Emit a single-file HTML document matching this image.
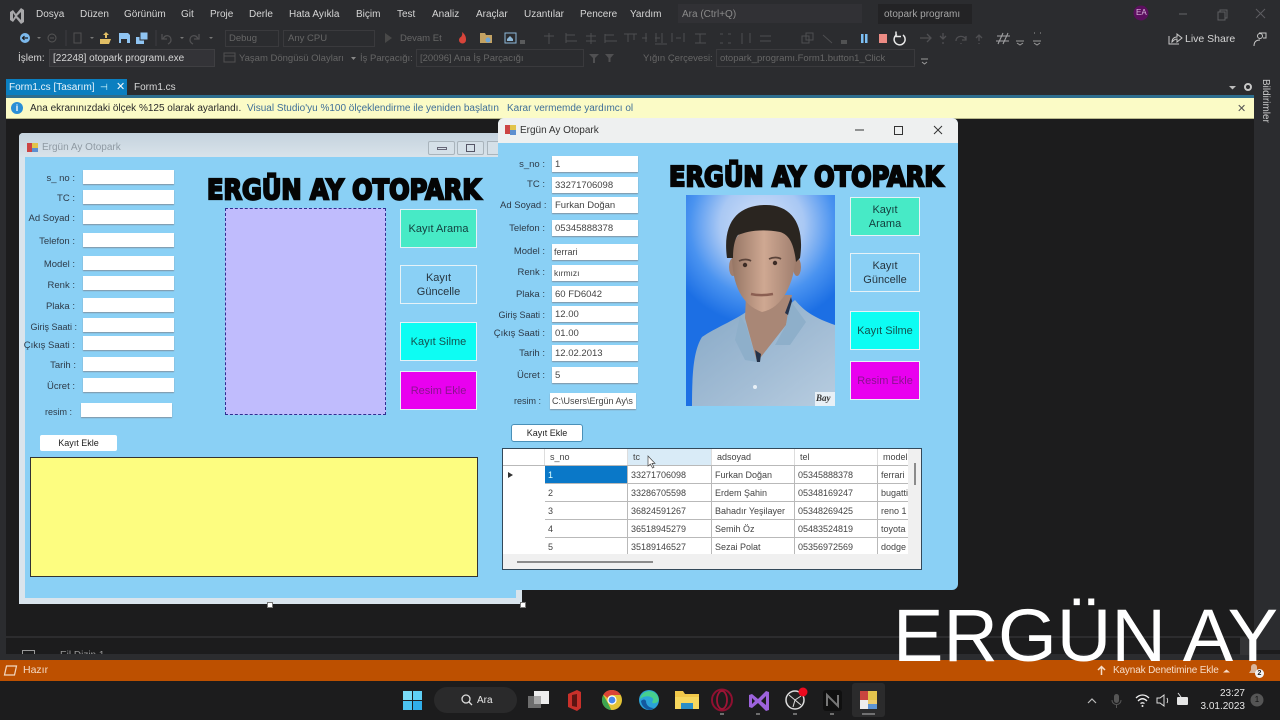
<!DOCTYPE html>
<html lang="tr"><head><meta charset="utf-8"><title>otopark programı</title>
<style>
html,body{margin:0;padding:0;width:1280px;height:720px;overflow:hidden;background:#1c1c1d}
body{position:relative;font-family:"Liberation Sans","DejaVu Sans",sans-serif;font-size:10px;color:#ddd;filter:blur(.3px)}
div{position:absolute;white-space:nowrap;box-sizing:border-box}
.m{top:8px;font-size:10px;line-height:13px;color:#d6d6d6}
.t{font-size:9.5px;line-height:13px;color:#666}
.ic{position:absolute;left:0;top:0}
.l{font-size:9.5px;line-height:12px;color:#2d3a48;text-align:right}
.in{background:#fff;box-shadow:0 1px 1px #8095a5;font-size:9.5px;line-height:17px;color:#444;padding-left:3px;overflow:hidden}
.b{border:1.5px solid #e6f2f7;padding-top:2px;font-size:11px;line-height:13.5px;color:#26353f;text-align:center;display:flex;align-items:center;justify-content:center;white-space:normal}
.h{top:449px;height:17px;font-size:9px;line-height:17px;color:#444;background:#fff;padding-left:5px;border-right:1px solid #ddd}
.c{height:18px;font-size:9px;line-height:19px;color:#444;background:#fff;border-right:1px solid #b9b9b9;border-bottom:1px solid #b9b9b9;padding-left:3px;overflow:hidden}
</style></head><body>

<!-- top chrome -->
<div style="left:0;top:0;width:1280px;height:95px;background:#2b2c2f"></div>
<svg class="ic" width="1280" height="95" style="z-index:1">
<path d="M10 12l3-2 3 4 5-6 3 2v12l-3 2-5-6-3 4-3-2zM13 13v6l2-3zM21 12l-4 4 4 4z" fill="#a8a8aa" fill-rule="evenodd"/>
<circle cx="25" cy="38" r="5" fill="#7cb9ec"/><path d="M28 38h-6M24.500 36l-2 2 2 2" stroke="#1c1c1d" fill="none" stroke-width="1.200"/>
<circle cx="52" cy="38" r="4" fill="none" stroke="#555"/><path d="M50 38h4" stroke="#555"/>
<path d="M37 37h4l-2 2zM90 37h4l-2 2zM180 37h4l-2 2zM209 37h4l-2 2z" fill="#777"/>
<rect x="74" y="33" width="7" height="10" fill="none" stroke="#505052"/>
<path d="M66 30v16M156 30v16" stroke="#3d3d40"/>
<path d="M100 39h11l-2 5h-9zM106 32l3 3h-2v3h-2v-3h-2z" fill="#e2bf65"/>
<path d="M119 33h9l2 2v8h-11z" fill="#8fc4f2"/><rect x="121" y="39" width="6" height="4" fill="#2b2c2f"/>
<rect x="136" y="37" width="8" height="7" fill="#8fc4f2"/><rect x="140" y="32" width="8" height="8" fill="#8fc4f2" stroke="#2b2c2f"/>
<path d="M162 34v5h5M163 39c2-5 8-4 8 1 0 2-1 3-3 4" fill="none" stroke="#505052" stroke-width="1.300"/>
<path d="M199 34v5h-5M198 39c-2-5-8-4-8 1 0 2 1 3 3 4" fill="none" stroke="#505052" stroke-width="1.300"/>
<path d="M385 33l7 5-7 5z" fill="#484848"/>
<path d="M461 37c2-3 1-4 1-5 4 3 4 6 4 8a3.500 3.500 0 0 1-7 0c0-1 1-3 2-3z" fill="#d8443a"/>
<path d="M480 33h5l1 2h6v8h-12z" fill="#c3a263"/><circle cx="488" cy="40" r="2.500" fill="#6fa6d8"/>
<rect x="505" y="33" width="11" height="10" fill="none" stroke="#8cb7d8"/><path d="M507 39l3-3 3 3v2h-6z" fill="#8cb7d8"/>
<path d="M520 41h5M520 43h5" stroke="#8a8a8a"/>
<g fill="none" stroke="#4e4e50">
<path d="M549 33v11M544 36h10M566 33v10M566 35h9M566 41h11M591 33v11M586 36h10M586 41h10M605 34v9M605 35h9M605 41h12M624 34h13M628 34v8M634 34v6M646 33v9M656 33v9M642 38h5M655 38h5M655 44h12M662 33v10M672 33v9M684 33v9M676 38h5M695 34h11M695 43h11M700 34v9M720 34h3M728 34h3M720 43h3M728 43h3M742 33v11M750 33v10M760 36h11M760 41h11"/>
<rect x="802" y="36" width="7" height="7"/><rect x="806" y="33" width="7" height="7"/>
<path d="M823 35l9 8"/>
</g>
<path d="M841 41h6M841 43h6" stroke="#777"/>
<rect x="861" y="34" width="2.500" height="9" fill="#7cc0f5"/><rect x="865" y="34" width="2.500" height="9" fill="#7cc0f5"/>
<rect x="879" y="34" width="8" height="9" fill="#ec8b84"/>
<path d="M903 35a5.500 5.500 0 1 1-6-.5M896 31.500v5h5" stroke="#e8e8e8" stroke-width="1.500" fill="none"/>
<g fill="none" stroke="#4f4f52" stroke-width="1.300">
<path d="M920 38h11M927 34l4 4-4 4M943 33v5M940 36l3 3 3-3M943 42v2M956 41c0-6 9-6 10-1M966 36v4h-4M961 43v1M979 35v6M976 38l3-3 3 3M979 43v1"/>
</g>
<path d="M1003 33l-5 11M1008 33l-5 11M997 36h13M996 41h13" fill="none" stroke="#a5a5a7"/>
<path d="M1016 41h8M1017 43l3 2 3-2M1034 33h1M1040 33h1M1033 41h8M1034 43l3 2 3-2M921 59h7M922 62l2.500 2 2.500-2" fill="none" stroke="#9a9a9a"/>
<path d="M208 57h5l-2.500 3zM351 57h5l-2.500 3z" fill="#888"/>
<rect x="224" y="53" width="11" height="9" fill="none" stroke="#505052"/><path d="M224 56h11" stroke="#505052"/>
<path d="M1169 36v8h10M1172 42c0-3 2-5 5-5v-3l5 4-5 4v-3c-2 0-3 1-5 3z" fill="none" stroke="#c8c8c8"/>
<circle cx="1141" cy="13" r="7.500" fill="#5b0f5e"/>
<path d="M1179 14h8" stroke="#66666a"/>
<rect x="1218" y="12" width="7" height="8" fill="none" stroke="#5e5e62"/><path d="M1220 12v-2h7v8h-2" fill="none" stroke="#5e5e62"/>
<path d="M1256 9l9 9M1265 9l-9 9" stroke="#5e5e62"/>
<circle cx="852" cy="11.500" r="3" fill="none" stroke="#ececec" stroke-width="1.500"/><path d="M850 14l-3.500 3.500" stroke="#ececec" stroke-width="1.800"/>
<circle cx="1260" cy="36" r="2.500" fill="none" stroke="#c6c6c6"/><path d="M1254 46c0-4 2-6 6-6M1259 33h7v5h-3" fill="none" stroke="#c6c6c6"/>
<path d="M589 54h10l-4 4v5h-2v-5zM605 54h9l-3.500 4v4h-2v-4zM627 58l9-3M627 62l9-3" fill="#505052"/>
<path d="M1229 86h7l-3.500 3.500z" fill="#bdbdbd"/>
<circle cx="1248" cy="87" r="3" stroke="#c8c8c8" stroke-width="2" fill="none"/>
</svg>
<div style="z-index:2;left:0;top:0;width:0;height:0">
<div class="m" style="left:36px">Dosya</div><div class="m" style="left:80px">Düzen</div><div class="m" style="left:124px">Görünüm</div><div class="m" style="left:181px">Git</div><div class="m" style="left:210px">Proje</div><div class="m" style="left:249px">Derle</div><div class="m" style="left:289px">Hata Ayıkla</div><div class="m" style="left:356px">Biçim</div><div class="m" style="left:397px">Test</div><div class="m" style="left:432px">Analiz</div><div class="m" style="left:476px">Araçlar</div><div class="m" style="left:524px">Uzantılar</div><div class="m" style="left:580px">Pencere</div><div class="m" style="left:630px">Yardım</div>
<div style="left:678px;top:4px;width:184px;height:19px;background:#313135"></div>
<div class="m" style="left:682px;color:#8a8a8a">Ara (Ctrl+Q)</div>
<div style="left:878px;top:4px;width:94px;height:20px;background:#232325"></div>
<div class="m" style="left:884px;color:#a5a5a5">otopark programı</div>
<div style="left:1136px;top:7px;font-size:8px;line-height:12px;color:#d9b6dc">EA</div>
<div style="left:225px;top:30px;width:54px;height:17px;border:1px solid #3a3a3d"></div>
<div style="left:283px;top:30px;width:92px;height:17px;border:1px solid #3a3a3d"></div>
<div class="t" style="left:229px;top:32px">Debug</div><div class="t" style="left:288px;top:32px">Any CPU</div>
<div class="t" style="left:400px;top:32px">Devam Et</div>
<div class="m" style="left:18px;top:52px">İşlem:</div>
<div style="left:49px;top:49px;width:166px;height:18px;background:#333337;border:1px solid #3f3f42"></div>
<div class="m" style="left:53px;top:52px">[22248] otopark programı.exe</div>
<div class="t" style="left:239px;top:52px">Yaşam Döngüsü Olayları</div><div class="t" style="left:360px;top:52px">İş Parçacığı:</div>
<div style="left:416px;top:49px;width:168px;height:18px;border:1px solid #3a3a3d"></div>
<div class="t" style="left:420px;top:52px">[20096] Ana İş Parçacığı</div>
<div class="t" style="left:643px;top:52px">Yığın Çerçevesi:</div>
<div style="left:716px;top:49px;width:199px;height:18px;border:1px solid #3a3a3d"></div>
<div class="t" style="left:720px;top:52px">otopark_programı.Form1.button1_Click</div>
<div style="left:1185px;top:32px;font-size:10.5px;line-height:14px;color:#d6d6d6">Live Share</div>
</div>

<!-- tabs + info bar -->
<div style="left:6px;top:79px;width:121px;height:17px;background:#0b7fc0"></div>
<div style="left:9px;top:81px;font-size:10px;line-height:13px;color:#e8f4fb">Form1.cs [Tasarım]</div>
<div style="left:100px;top:81px;font-size:9px;line-height:13px;color:#dff">⊣</div>
<div style="left:116px;top:81px;font-size:11px;line-height:13px;color:#f2f8fc">✕</div>
<div style="left:134px;top:81px;font-size:10px;line-height:13px;color:#d6d6d6">Form1.cs</div>
<div style="left:6px;top:95px;width:1248px;height:3px;background:#2e6e8e"></div>
<div style="left:6px;top:98px;width:1248px;height:21px;background:#fbfbc6;border-bottom:1px solid #b9b98c"></div>
<div style="left:11px;top:102px;width:12px;height:12px;border-radius:50%;background:#2a8fd6;color:#fff;font-size:9px;line-height:12px;text-align:center;font-weight:bold">i</div>
<div style="left:30px;top:102px;font-size:10px;line-height:13px;color:#2a2a2a">Ana ekranınızdaki ölçek %125 olarak ayarlandı.</div>
<div style="left:247px;top:102px;font-size:10px;line-height:13px;color:#3f6f98">Visual Studio'yu %100 ölçeklendirme ile yeniden başlatın</div>
<div style="left:507px;top:102px;font-size:10px;line-height:13px;color:#3f6f98">Karar vermemde yardımcı ol</div>
<div style="left:1237px;top:103px;font-size:11px;line-height:12px;color:#555">✕</div>
<div style="left:1254px;top:95px;width:26px;height:555px;background:#2b2c2f"></div>
<div style="left:1259px;top:79px;font-size:10px;line-height:12px;color:#c9c9c9;writing-mode:vertical-rl">Bildirimler</div>
<div style="left:0;top:95px;width:6px;height:560px;background:#2b2c2f"></div>

<!-- designer form -->
<div style="left:19px;top:133px;width:503px;height:471px;background:#d9e4ec;border-radius:4px 4px 0 0"></div>
<div style="left:19px;top:133px;width:503px;height:24px;background:linear-gradient(#c5d3de,#d9e3ea);border-radius:4px 4px 0 0"></div>
<div style="left:25px;top:157px;width:491px;height:441px;background:#8ad0f5"></div>
<div style="left:27px;top:143px;width:6px;height:9px;background:#c44"></div><div style="left:32px;top:143px;width:6px;height:5px;background:#e2c44a"></div><div style="left:32px;top:148px;width:6px;height:4px;background:#5d8fd0"></div>
<div style="left:42px;top:141px;font-size:10px;line-height:13px;color:#8f9aa3">Ergün Ay Otopark</div>
<div style="left:428px;top:141px;width:27px;height:14px;background:#d5e0e8;border:1px solid #a9b4bc;border-radius:2px"></div><div style="left:437px;top:147px;width:10px;height:3px;border:1px solid #667"></div>
<div style="left:457px;top:141px;width:27px;height:14px;background:#d5e0e8;border:1px solid #a9b4bc;border-radius:2px"></div><div style="left:466px;top:144px;width:9px;height:8px;border:1px solid #556"></div>
<div style="left:487px;top:141px;width:12px;height:14px;background:#d5e0e8;border:1px solid #a9b4bc"></div>

<div class="l" style="left:20px;top:173px;width:55px">s_ no :</div>
<div class="l" style="left:20px;top:193px;width:55px">TC :</div>
<div class="l" style="left:20px;top:213px;width:55px">Ad Soyad :</div>
<div class="l" style="left:20px;top:236px;width:55px">Telefon :</div>
<div class="l" style="left:20px;top:259px;width:55px">Model :</div>
<div class="l" style="left:20px;top:280px;width:55px">Renk :</div>
<div class="l" style="left:20px;top:301px;width:55px">Plaka :</div>
<div class="l" style="left:20px;top:321px;width:57px;font-size:9px">Giriş Saati :</div>
<div class="l" style="left:20px;top:340px;width:55px;font-size:9.5px">Çıkış  Saati :</div>
<div class="l" style="left:20px;top:360px;width:56px">Tarih :</div>
<div class="l" style="left:20px;top:381px;width:55px">Ücret :</div>
<div class="l" style="left:20px;top:406px;width:52px;font-size:9px">resim :</div>
<div class="in" style="left:83px;top:170px;width:91px;height:14px"></div>
<div class="in" style="left:83px;top:190px;width:91px;height:14px"></div>
<div class="in" style="left:83px;top:210px;width:91px;height:14px"></div>
<div class="in" style="left:83px;top:233px;width:91px;height:14px"></div>
<div class="in" style="left:83px;top:256px;width:91px;height:14px"></div>
<div class="in" style="left:83px;top:276px;width:91px;height:14px"></div>
<div class="in" style="left:83px;top:298px;width:91px;height:14px"></div>
<div class="in" style="left:83px;top:318px;width:91px;height:14px"></div>
<div class="in" style="left:83px;top:336px;width:91px;height:14px"></div>
<div class="in" style="left:83px;top:357px;width:91px;height:14px"></div>
<div class="in" style="left:83px;top:378px;width:91px;height:14px"></div>
<div class="in" style="left:81px;top:403px;width:91px;height:14px"></div>
<svg class="ic" width="500" height="210" style="z-index:1">
<text x="207" y="199" font-family="DejaVu Sans,Liberation Sans,sans-serif" font-weight="bold" font-size="28" textLength="274" lengthAdjust="spacingAndGlyphs" fill="#050505" stroke="#050505" stroke-width="2.200">ERGÜN AY OTOPARK</text>
</svg>
<div style="left:225px;top:208px;width:161px;height:207px;background:#c0bcfd;border:1px dashed #2f2f90"></div>
<div class="b" style="left:400px;top:209px;width:77px;height:39px;background:#47eac6;color:#13403f">Kayıt Arama</div>
<div class="b" style="left:400px;top:265px;width:77px;height:39px;background:#8ad0f5">Kayıt<br>Güncelle</div>
<div class="b" style="left:400px;top:322px;width:77px;height:39px;background:#0dfdf3;color:#13514f">Kayıt Silme</div>
<div class="b" style="left:400px;top:371px;width:77px;height:39px;background:#e900ef;color:#8a1290">Resim Ekle</div>
<div class="b" style="left:40px;top:435px;width:77px;height:16px;background:#fff;border:0;font-size:9px;border-radius:2px;color:#222">Kayıt Ekle</div>
<div style="left:30px;top:457px;width:448px;height:120px;background:#fdfd80;border:1px solid #333"></div>
<div style="left:267px;top:602px;width:6px;height:6px;background:#fff;border:1px solid #777"></div>
<div style="left:520px;top:602px;width:6px;height:6px;background:#fff;border:1px solid #777"></div>
<div style="left:6px;top:636px;width:1248px;height:2px;background:#2c2c2e"></div>
<div style="left:22px;top:650px;width:13px;height:5px;border:1px solid #999;border-bottom:0"></div>
<div style="left:60px;top:650px;height:4px;overflow:hidden;font-size:10px;line-height:12px;color:#999">Eil Dizin 1</div>
<div style="left:0;top:654px;width:1280px;height:6px;background:#2b2c2f"></div>
<div style="left:1240px;top:637px;width:10px;height:18px;background:#343436"></div>

<!-- running form -->
<div style="left:498px;top:118px;width:460px;height:472px;background:#8ad0f5;border-radius:6px;overflow:hidden">
<div style="left:0;top:0;width:460px;height:25px;background:#eef0f0"></div>
</div>
<div style="left:505px;top:125px;width:6px;height:9px;background:#c44"></div><div style="left:510px;top:125px;width:6px;height:5px;background:#e2c44a"></div><div style="left:510px;top:130px;width:6px;height:5px;background:#5d8fd0"></div>
<div style="left:520px;top:124px;font-size:10px;line-height:13px;color:#333">Ergün Ay Otopark</div>
<svg class="ic" width="960" height="140" style="z-index:1">
<path d="M855 130h9" stroke="#333"/><rect x="894.500" y="126.500" width="8" height="8" fill="none" stroke="#333"/><path d="M934 126l8 8M942 126l-8 8" stroke="#333"/>
</svg>
<div class="l" style="left:500px;top:159px;width:45px">s_no :</div>
<div class="l" style="left:500px;top:179px;width:45px">TC :</div>
<div class="l" style="left:500px;top:200px;width:45px">Ad Soyad :</div>
<div class="l" style="left:500px;top:223px;width:45px">Telefon :</div>
<div class="l" style="left:500px;top:246px;width:45px">Model :</div>
<div class="l" style="left:500px;top:267px;width:45px">Renk :</div>
<div class="l" style="left:500px;top:289px;width:45px">Plaka :</div>
<div class="l" style="left:495px;top:309px;width:50px;font-size:9px">Giriş Saati :</div>
<div class="l" style="left:490px;top:328px;width:55px;font-size:9.5px">Çıkış  Saati :</div>
<div class="l" style="left:500px;top:348px;width:45px">Tarih :</div>
<div class="l" style="left:500px;top:370px;width:45px">Ücret :</div>
<div class="l" style="left:500px;top:395px;width:41px;font-size:9px">resim :</div>
<div class="in" style="left:552px;top:156px;width:86px;height:16px">1</div>
<div class="in" style="left:552px;top:177px;width:86px;height:16px">33271706098</div>
<div class="in" style="left:552px;top:197px;width:86px;height:16px">Furkan Doğan</div>
<div class="in" style="left:552px;top:220px;width:86px;height:16px">05345888378</div>
<div class="in" style="left:552px;top:244px;width:86px;height:16px;padding-left:2px;font-size:9px">ferrari</div>
<div class="in" style="left:552px;top:265px;width:86px;height:16px;padding-left:2px;font-size:8.500px">kırmızı</div>
<div class="in" style="left:552px;top:286px;width:86px;height:16px">60 FD6042</div>
<div class="in" style="left:552px;top:306px;width:86px;height:16px">12.00</div>
<div class="in" style="left:552px;top:325px;width:86px;height:16px">01.00</div>
<div class="in" style="left:552px;top:345px;width:86px;height:16px">12.02.2013</div>
<div class="in" style="left:552px;top:367px;width:86px;height:16px">5</div>
<div class="in" style="left:550px;top:393px;width:86px;height:16px;padding-left:2px;font-size:9px">C:\Users\Ergün Ay\s</div>
<svg class="ic" width="960" height="420" style="z-index:1">
<defs>
<radialGradient id="bg" gradientUnits="userSpaceOnUse" cx="762" cy="225" r="100"><stop offset="0" stop-color="#d4e2f8"/><stop offset=".42" stop-color="#a9c8f4"/><stop offset=".72" stop-color="#4a93f0"/><stop offset="1" stop-color="#1c6fe4"/></radialGradient>
<linearGradient id="sh" x1="0" y1="0" x2="1" y2="1"><stop offset="0" stop-color="#86a8c6"/><stop offset=".6" stop-color="#a3bdd5"/><stop offset="1" stop-color="#b8cde0"/></linearGradient>
<linearGradient id="fc" x1="0" y1="0" x2="1" y2="0"><stop offset="0" stop-color="#967665"/><stop offset=".5" stop-color="#cfa892"/><stop offset="1" stop-color="#a07f6f"/></linearGradient>
</defs>
<text x="669" y="186" font-family="DejaVu Sans,Liberation Sans,sans-serif" font-weight="bold" font-size="28" textLength="274" lengthAdjust="spacingAndGlyphs" fill="#050505" stroke="#050505" stroke-width="2.200">ERGÜN AY OTOPARK</text>
<rect x="686" y="195" width="149" height="211" fill="url(#bg)"/>
<path d="M692 406C692 370 694 350 702 337 715 328 735 320 746 312L760 330 795 300C805 312 815 318 835 325V406Z" fill="url(#sh)"/>
<path d="M746 295L745 318 757 362 786 325 792 295Z" fill="#a98776"/>
<ellipse cx="733" cy="267" rx="4" ry="9" fill="#a17f6e"/><ellipse cx="797" cy="267" rx="4" ry="9" fill="#9f7d6c"/>
<path d="M732 255C732 285 742 305 762 312 782 308 794 285 796 255 796 235 780 225 764 225 745 225 732 235 732 255Z" fill="url(#fc)"/>
<path d="M727 258C722 222 738 205 766 205 792 205 805 225 800 258L796 262C794 245 790 235 780 232 760 228 745 232 738 235 734 240 733 250 733 258Z" fill="#2a2520"/>
<path d="M739 261c4-2 9-2 12 0M769 259c4-2 9-2 12 0" stroke="#5c443a" stroke-width="1.800" fill="none"/>
<circle cx="745" cy="265" r="2.200" fill="#3d2c26"/><circle cx="775" cy="263" r="2.200" fill="#3d2c26"/>
<path d="M751 294c6 1.500 14 1.500 22 0" stroke="#8b5f52" stroke-width="2.500" fill="none"/>
<path d="M740 316L735 340 745 360 757 362 746 325ZM790 300L806 322 790 345 775 345 786 325Z" fill="#8eafca"/>
<path d="M755 350l2 12 3 0 1-8z" fill="#24334a"/><path d="M791 297l-6 16 3 2 4-14z" fill="#26324a"/>
<circle cx="755" cy="387" r="2" fill="#e8f0f6"/>
<rect x="815" y="392" width="20" height="14" fill="#e8f0f6"/>
<text x="816" y="401" font-family="Liberation Serif,serif" font-style="italic" font-weight="bold" font-size="9" fill="#333">Bay</text>
</svg>
<div class="b" style="left:850px;top:197px;width:70px;height:39px;background:#47eac6;color:#13403f">Kayıt<br>Arama</div>
<div class="b" style="left:850px;top:253px;width:70px;height:39px;background:#8ad0f5">Kayıt<br>Güncelle</div>
<div class="b" style="left:850px;top:311px;width:70px;height:39px;background:#0dfdf3;color:#13514f">Kayıt Silme</div>
<div class="b" style="left:850px;top:361px;width:70px;height:39px;background:#e900ef;color:#8a1290">Resim Ekle</div>
<div class="b" style="left:511px;top:424px;width:72px;height:18px;background:#fff;border:1px solid #4a90b8;border-radius:3px;font-size:9px;color:#222">Kayıt Ekle</div>

<!-- grid -->
<div style="left:502px;top:448px;width:420px;height:122px;background:#f0f0f0;border:1px solid #33495a"></div>
<div style="left:503px;top:449px;width:405px;height:105px;background:#fff"></div>
<div class="h" style="left:503px;width:42px"></div><div class="h" style="left:545px;width:83px">s_no</div><div class="h" style="left:628px;width:84px;background:#d9ebf7;padding-left:5px">tc</div><div class="h" style="left:712px;width:83px">adsoyad</div><div class="h" style="left:795px;width:83px">tel</div><div class="h" style="left:878px;width:30px;padding-left:5px;border-right:0">model</div>
<div style="left:503px;top:465px;width:405px;height:1px;background:#b9b9b9"></div>
<div style="left:508px;top:472px;width:0;height:0;border-left:5px solid #333;border-top:3.500px solid transparent;border-bottom:3.500px solid transparent"></div>

<div class="c" style="left:545px;top:466px;width:83px;background:#0a78c8;color:#dff">1</div><div class="c" style="left:628px;top:466px;width:84px">33271706098</div><div class="c" style="left:712px;top:466px;width:83px">Furkan Doğan</div><div class="c" style="left:795px;top:466px;width:83px">05345888378</div><div class="c" style="left:878px;top:466px;width:30px;border-right:0">ferrari</div>
<div class="c" style="left:545px;top:484px;width:83px">2</div><div class="c" style="left:628px;top:484px;width:84px">33286705598</div><div class="c" style="left:712px;top:484px;width:83px">Erdem Şahin</div><div class="c" style="left:795px;top:484px;width:83px">05348169247</div><div class="c" style="left:878px;top:484px;width:30px;border-right:0">bugatti</div>
<div class="c" style="left:545px;top:502px;width:83px">3</div><div class="c" style="left:628px;top:502px;width:84px">36824591267</div><div class="c" style="left:712px;top:502px;width:83px">Bahadır Yeşilayer</div><div class="c" style="left:795px;top:502px;width:83px">05348269425</div><div class="c" style="left:878px;top:502px;width:30px;border-right:0">reno 1</div>
<div class="c" style="left:545px;top:520px;width:83px">4</div><div class="c" style="left:628px;top:520px;width:84px">36518945279</div><div class="c" style="left:712px;top:520px;width:83px">Semih Öz</div><div class="c" style="left:795px;top:520px;width:83px">05483524819</div><div class="c" style="left:878px;top:520px;width:30px;border-right:0">toyota</div>
<div class="c" style="left:545px;top:538px;width:83px;height:16px;border-bottom:0">5</div><div class="c" style="left:628px;top:538px;width:84px;height:16px;border-bottom:0">35189146527</div><div class="c" style="left:712px;top:538px;width:83px;height:16px;border-bottom:0">Sezai Polat</div><div class="c" style="left:795px;top:538px;width:83px;height:16px;border-bottom:0">05356972569</div><div class="c" style="left:878px;top:538px;width:30px;height:16px;border-right:0;border-bottom:0">dodge</div>
<div style="left:517px;top:561px;width:136px;height:2px;background:#8b8b8b"></div>
<div style="left:914px;top:463px;width:2px;height:22px;background:#8b8b8b"></div>
<svg class="ic" width="660" height="470" style="z-index:2"><path d="M648 456v10l2.500-2 2 4 1.500-.8-2-3.800h3z" fill="#fff" stroke="#444" stroke-width=".7"/></svg>

<!-- status bar + taskbar -->
<div style="left:0;top:660px;width:1280px;height:21px;background:#bd5000"></div>
<div style="left:0;top:681px;width:1280px;height:39px;background:#1c1c1d"></div>
<div style="left:434px;top:687px;width:83px;height:26px;border-radius:13px;background:#2a2a2b"></div>
<svg class="ic" width="1280" height="720" style="z-index:1">
<path d="M4.500 675h10l2-9h-10z" fill="none" stroke="#f3d9c4" stroke-width="1.200"/>
<path d="M1101.500 675v-8M1098 670l3.500-3.500 3.500 3.500" fill="none" stroke="#f6dcc8" stroke-width="1.500"/>
<path d="M1223 672.500l3.500-3 3.500 3z" fill="#f6dcc8"/>
<path d="M1249 673l2-3v-3a3 3 0 0 1 6 0v3l2 3z" fill="#d9b59a"/>
<circle cx="1259.500" cy="673.500" r="4.500" fill="#f3f3f3"/>
<rect x="403" y="691" width="9" height="9" fill="#7adcf8"/><rect x="413" y="691" width="9" height="9" fill="#5fd0f6"/><rect x="403" y="701" width="9" height="9" fill="#4cc4f2"/><rect x="413" y="701" width="9" height="9" fill="#30aeea"/>
<rect x="528" y="696" width="13" height="12" fill="#6d6d6d"/><rect x="534" y="691" width="15" height="13" fill="#ededed"/><rect x="534" y="696" width="7" height="8" fill="#a9a9a9"/>
<path d="M568 694l9-4 4 2v16l-4 3-9-4z" fill="#c9302a"/><path d="M572 695l5-1v13l-5-1z" fill="#5c1512"/>
<circle cx="612" cy="700" r="10" fill="#e2c336"/><path d="M612 690a10 10 0 0 1 8.700 5H612a5 5 0 0 0-4.500 3l-4.200-3.500A10 10 0 0 1 612 690z" fill="#db4437"/><path d="M603.300 695l4.500 8 3.500 7a10 10 0 0 1-8-15z" fill="#3da44f"/><circle cx="612" cy="700" r="4.600" fill="#fff"/><circle cx="612" cy="700" r="3.400" fill="#4787ed"/>
<circle cx="649" cy="700" r="10" fill="#2aa3d8"/><path d="M640 699a9.500 9.500 0 0 1 18.500-1c1 4-3 6-6 5-1-2 2-3 0-5-4-3-9-2-12.500 1z" fill="#46cf8e"/><path d="M646 701c0 4 3 7 8 7l-4 2a10 10 0 0 1-9-9c2-2 4-2 5 0z" fill="#13599f"/>
<path d="M675 691h8l2 3h14v15h-24z" fill="#f1c84a"/><rect x="675" y="697" width="24" height="12" fill="#f6d75e"/><rect x="681" y="703" width="12" height="6" fill="#2a8ec7"/>
<ellipse cx="722" cy="700" rx="10" ry="10.500" fill="none" stroke="#8e1030" stroke-width="2"/><ellipse cx="722" cy="700" rx="5" ry="9" fill="none" stroke="#a01436" stroke-width="1.800"/>
<path d="M749 695l3-1 6 5 8-8 3 1v18l-3 1-8-8-6 5-3-1zM752 698v6l3-3zM766 696l-5 5 5 4z" fill="#9d63dc" fill-rule="evenodd"/>
<circle cx="795" cy="700" r="9" fill="#222" stroke="#ddd" stroke-width="1.500"/><path d="M789 695l6 5-2 7M801 696l-6 4 6 5" stroke="#ddd" fill="none"/><circle cx="803" cy="692" r="4.500" fill="#ec0a1e"/>
<rect x="823" y="690" width="19" height="21" rx="3" fill="#101010"/><path d="M827 706v-11l11 11v-11" stroke="#777" stroke-width="2" fill="none"/>
<rect x="852" y="683" width="33" height="34" rx="3" fill="#2b2b2c"/>
<rect x="860" y="691" width="8" height="9" fill="#c8453f"/><rect x="868" y="691" width="9" height="9" fill="#e3c44d"/><rect x="860" y="700" width="8" height="9" fill="#eee"/><rect x="868" y="700" width="9" height="4" fill="#eccb6d"/><rect x="868" y="704" width="9" height="5" fill="#5d94d4"/>
<path d="M720 714h4M756 714h4M793 714h4M830 714h4M862 714h13" stroke="#888" stroke-width="1.500"/>
<circle cx="466" cy="699" r="4" fill="none" stroke="#ddd" stroke-width="1.300"/><path d="M469 702l3 3" stroke="#ddd" stroke-width="1.300"/>
<path d="M1088 703l4-4 4 4" fill="none" stroke="#bbb" stroke-width="1.200"/>
<rect x="1114" y="694" width="5" height="9" rx="2.500" fill="#555"/><path d="M1112 700c0 6 9 6 9 0M1116.500 705v3" stroke="#555" fill="none"/>
<path d="M1136 698c4-4 9-4 13 0M1138 701c3-3 6-3 9 0M1140.500 703.500c1.500-1 2.500-1 4 0" fill="none" stroke="#eee" stroke-width="1.300"/><circle cx="1142.500" cy="706" r="1" fill="#eee"/>
<path d="M1157 698h3l4-3v11l-4-3h-3zM1167 698c1 2 1 3 0 5" fill="none" stroke="#ddd"/>
<rect x="1177" y="697" width="11" height="8" rx="1" fill="#e6e6e6"/><path d="M1178 693l3 4" stroke="#ddd"/>
<circle cx="1257" cy="700" r="6.500" fill="#555"/>
</svg>
<div style="z-index:2;left:23px;top:664px;font-size:10.5px;line-height:13px;color:#f3d9c4">Hazır</div>
<div style="z-index:2;left:1113px;top:664px;font-size:10px;line-height:13px;color:#f6dcc8;letter-spacing:-.15px">Kaynak Denetimine Ekle</div>
<div style="z-index:2;left:1255.500px;top:668px;width:8px;font-size:7px;line-height:11px;text-align:center;color:#222;font-weight:bold">2</div>
<div style="z-index:2;left:477px;top:694px;font-size:10px;line-height:13px;color:#e6e6e6">Ara</div>
<div style="z-index:2;left:1200px;top:687px;width:45px;font-size:10px;line-height:13px;color:#e6e6e6;text-align:right">23:27</div>
<div style="z-index:2;left:1195px;top:700px;width:50px;font-size:10px;line-height:13px;color:#e6e6e6;text-align:right">3.01.2023</div>
<div style="z-index:2;left:1253px;top:694px;width:8px;font-size:8px;line-height:12px;text-align:center;color:#111">1</div>

<!-- overlay -->
<svg class="ic" width="1280" height="720" style="z-index:3">
<text x="893" y="661" font-family="Liberation Sans,sans-serif" font-size="74" textLength="385" lengthAdjust="spacingAndGlyphs" fill="#fff">ERGÜN AY</text>
</svg>
</body></html>
